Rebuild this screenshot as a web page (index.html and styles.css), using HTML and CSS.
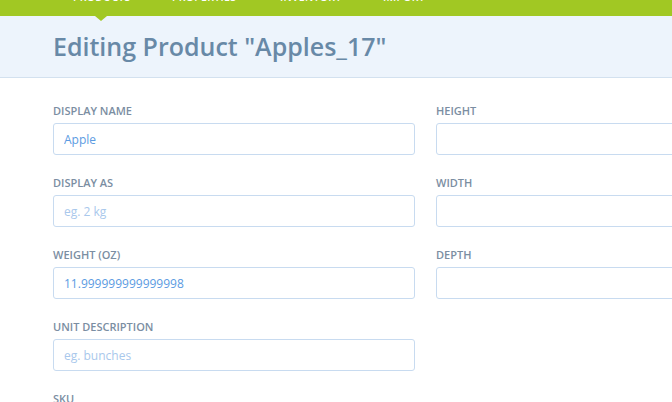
FILE: index.html
```html
<!DOCTYPE html>
<html>
<head>
<meta charset="utf-8">
<link rel="stylesheet" href="styles.css">
</head>
<body>
<nav class="topnav">
  <a class="nav-item active">PRODUCTS</a>
  <a class="nav-item">PROPERTIES</a>
  <a class="nav-item">INVENTORY</a>
  <a class="nav-item">IMPORT</a>
</nav>
<header class="page-header">
  <h1 class="title">Editing Product "Apples_17"</h1>
</header>
<main class="form">
  <div class="col">
    <div class="field">
      <label class="label">DISPLAY NAME</label>
      <input class="input" value="Apple">
    </div>
    <div class="field">
      <label class="label">DISPLAY AS</label>
      <input class="input" placeholder="eg. 2 kg">
    </div>
    <div class="field">
      <label class="label">WEIGHT (OZ)</label>
      <input class="input" value="11.999999999999998">
    </div>
    <div class="field">
      <label class="label">UNIT DESCRIPTION</label>
      <input class="input" placeholder="eg. bunches">
    </div>
    <div class="field">
      <label class="label">SKU</label>
      <input class="input">
    </div>
  </div>
  <div class="col">
    <div class="field">
      <label class="label">HEIGHT</label>
      <input class="input">
    </div>
    <div class="field">
      <label class="label">WIDTH</label>
      <input class="input">
    </div>
    <div class="field">
      <label class="label">DEPTH</label>
      <input class="input">
    </div>
  </div>
</main>
</body>
</html>
```
FILE: styles.css
```css
html, body {
  margin: 0;
  padding: 0;
  background: #ffffff;
  overflow: hidden;
  font-family: "Open Sans", "Liberation Sans", sans-serif;
}
body {
  width: 672px;
  height: 402px;
}
.topnav {
  height: 16px;
  background: #a1c823;
  display: flex;
  align-items: flex-end;
  padding-left: 73px;
  position: relative;
}
.nav-item {
  position: relative;
  color: #ffffff;
  font-size: 10.5px;
  font-weight: 600;
  line-height: 11px;
  margin-bottom: 13px;
  letter-spacing: 0.3px;
}
.nav-item:nth-child(1) { width: 99px; }
.nav-item:nth-child(2) { width: 108px; }
.nav-item:nth-child(3) { width: 103px; }
.nav-item.active::after {
  content: "";
  position: absolute;
  left: 22px;
  top: 24px;
  border-left: 6px solid transparent;
  border-right: 6px solid transparent;
  border-top: 5px solid #a1c823;
}
.page-header {
  background: #edf4fc;
  border-bottom: 1px solid #d3e1ef;
  height: 61px;
  padding-left: 53px;
  display: flex;
  align-items: center;
}
.title {
  margin: 0;
  font-size: 25px;
  font-weight: 600;
  color: #6889a7;
  line-height: 30px;
  padding-bottom: 2px;
}
.form {
  display: flex;
  gap: 21px;
  padding: 25px 0 0 53px;
  width: 900px;
}
.col {
  width: 362px;
  display: flex;
  flex-direction: column;
  flex-shrink: 0;
}
.field {
  display: flex;
  flex-direction: column;
  height: 72px;
}
.label {
  font-size: 11px;
  font-weight: 600;
  color: #7b8ea2;
  line-height: 16px;
  margin-bottom: 4px;
}
.input {
  box-sizing: border-box;
  height: 32px;
  width: 100%;
  border: 1px solid #c8dbf0;
  border-radius: 3px;
  padding: 0 10px;
  font-family: "Open Sans", "Liberation Sans", sans-serif;
  font-size: 12px;
  color: #5b9be2;
  background: #ffffff;
  outline: none;
}
.input::placeholder {
  color: #a9c8ec;
}
```
